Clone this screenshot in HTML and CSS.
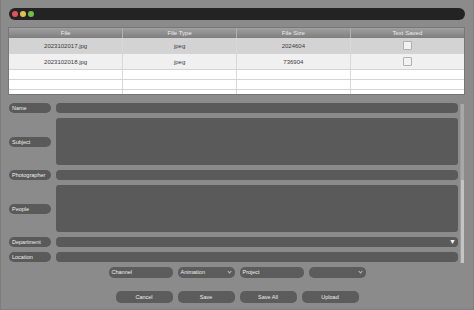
FILE: index.html
```html
<!DOCTYPE html>
<html>
<head>
    <title>Photo Uploader</title>
    <link rel="stylesheet" href="styles.css">
</head>
<body>
    <div class="window">
        <div class="titlebar">
            <span class="light red"></span>
            <span class="light yellow"></span>
            <span class="light green"></span>
        </div>

        <table class="files">
            <thead>
                <tr>
                    <th>File</th>
                    <th>File Type</th>
                    <th>File Size</th>
                    <th>Text Saved</th>
                </tr>
            </thead>
            <tbody>
                <tr class="sel">
                    <td>2023102017.jpg</td>
                    <td>jpeg</td>
                    <td>2024604</td>
                    <td><span class="check"></span></td>
                </tr>
                <tr class="alt">
                    <td>2023102018.jpg</td>
                    <td>jpeg</td>
                    <td>736904</td>
                    <td><span class="check"></span></td>
                </tr>
                <tr class="empty"><td></td><td></td><td></td><td></td></tr>
                <tr class="empty"><td></td><td></td><td></td><td></td></tr>
                <tr class="stub"><td></td><td></td><td></td><td></td></tr>
            </tbody>
        </table>

        <div class="form-wrap">
            <div class="form">
                <div class="row">
                    <span class="label">Name</span>
                    <div class="field"></div>
                </div>
                <div class="row tall">
                    <span class="label">Subject</span>
                    <div class="field area"></div>
                </div>
                <div class="row">
                    <span class="label">Photographer</span>
                    <div class="field"></div>
                </div>
                <div class="row tall">
                    <span class="label">People</span>
                    <div class="field area"></div>
                </div>
                <div class="row">
                    <span class="label">Department</span>
                    <div class="field combo"><span class="arrow">&#9660;</span></div>
                </div>
                <div class="row">
                    <span class="label">Location</span>
                    <div class="field"></div>
                </div>
            </div>
            <div class="scrollbar">
                <span class="thumb"></span>
            </div>
        </div>

        <div class="meta">
            <div class="pill input">Channel</div>
            <div class="pill select">Animation <span class="chev"></span></div>
            <div class="pill input">Project</div>
            <div class="pill select"><span class="chev"></span></div>
        </div>

        <div class="actions">
            <button class="btn">Cancel</button>
            <button class="btn">Save</button>
            <button class="btn">Save All</button>
            <button class="btn">Upload</button>
        </div>
    </div>
</body>
</html>
```

FILE: styles.css
```css
html, body {
    margin: 0;
    padding: 0;
}

body {
    font-family: "Liberation Sans", Arial, sans-serif;
    background: #8b8b8b;
    width: 474px;
    height: 310px;
    overflow: hidden;
}

.window {
    height: 310px;
    box-sizing: border-box;
    padding: 8px 8px 0 8px;
    border: 1px solid #7e7e7e;
    border-top: none;
}

.titlebar {
    height: 12px;
    background: #232323;
    border-radius: 6px;
    display: flex;
    align-items: center;
    gap: 2px;
    padding-left: 3px;
}

.light {
    width: 6px;
    height: 6px;
    border-radius: 50%;
}

.red { background: #e0535a; }
.yellow { background: #e2c050; }
.green { background: #6cc04a; }

.files {
    width: 455px;
    margin: 8px 0 0 0;
    border-collapse: collapse;
    table-layout: fixed;
    font-size: 6px;
    background: #fff;
    box-shadow: 0 0 0 1px #777;
}

.files th {
    height: 10px;
    padding: 0;
    font-weight: normal;
    color: #ececec;
    background: linear-gradient(#a0a0a0, #7e7e7e);
    border-left: 1px solid #b0b0b0;
}

.files td {
    height: 15px;
    padding: 0;
    text-align: center;
    color: #3a3a3a;
    border-left: 1px solid #d8d8d8;
    border-bottom: 1px solid #d4d4d4;
}

.files th:first-child,
.files td:first-child {
    border-left: none;
}

.files tr.sel td { background: #d3d3d3; }
.files tr.alt td { background: #f0f0f0; }
.files tr.empty td { height: 9px; }
.files tr.stub td { height: 4px; border-bottom: none; }

.check {
    display: inline-block;
    width: 7px;
    height: 7px;
    border: 1px solid #b0b0b0;
    border-radius: 1px;
    background: #f2f2f2;
    vertical-align: middle;
}

.form-wrap {
    display: flex;
    margin-top: 9px;
    gap: 2px;
}

.form {
    width: 449px;
    display: flex;
    flex-direction: column;
    gap: 5px;
}

.row {
    display: flex;
    align-items: center;
    gap: 5px;
    height: 10px;
}

.row.tall {
    height: 47px;
}

.label {
    flex: 0 0 42px;
    height: 10px;
    line-height: 10px;
    box-sizing: border-box;
    padding-left: 3px;
    background: #5a5a5a;
    color: #eeeeee;
    font-size: 5.5px;
    border-radius: 5px;
    overflow: hidden;
    white-space: nowrap;
}

.field {
    flex: 1;
    height: 10px;
    background: #5a5a5a;
    border-radius: 4px;
    position: relative;
}

.field.area {
    height: 47px;
    border-radius: 3px;
}

.arrow {
    position: absolute;
    right: 2px;
    top: 1px;
    font-size: 7px;
    line-height: 8px;
    color: #f4f4f4;
}

.scrollbar {
    width: 3px;
    height: 159px;
    margin-top: 1px;
    background: #a8a8a8;
    border-left: 1px solid #9c9c9c;
    position: relative;
}

.thumb {
    position: absolute;
    left: 0;
    right: 0;
    top: 76px;
    bottom: 0;
    background: #c4c4c4;
}

.meta {
    display: flex;
    justify-content: center;
    gap: 5px;
    margin-top: 4px;
    margin-left: -8px;
    margin-right: -8px;
}

.pill {
    height: 11px;
    line-height: 11px;
    box-sizing: border-box;
    background: #5c5c5c;
    color: #eeeeee;
    font-size: 5.5px;
    padding-left: 3px;
    border-radius: 5px;
    position: relative;
}

.pill.input { width: 64px; }
.pill.select { width: 57px; }

.chev {
    position: absolute;
    right: 4px;
    top: 3px;
    width: 2px;
    height: 2px;
    border-right: 1px solid #bdbdbd;
    border-bottom: 1px solid #bdbdbd;
    transform: rotate(45deg);
}

.actions {
    display: flex;
    justify-content: center;
    gap: 5px;
    margin-top: 13px;
    margin-left: -8px;
    margin-right: -8px;
}

.btn {
    width: 57px;
    height: 12px;
    padding: 0;
    border: none;
    border-radius: 5px;
    background: #5c5c5c;
    color: #eeeeee;
    font-family: "Liberation Sans", Arial, sans-serif;
    font-size: 5.5px;
}
```
